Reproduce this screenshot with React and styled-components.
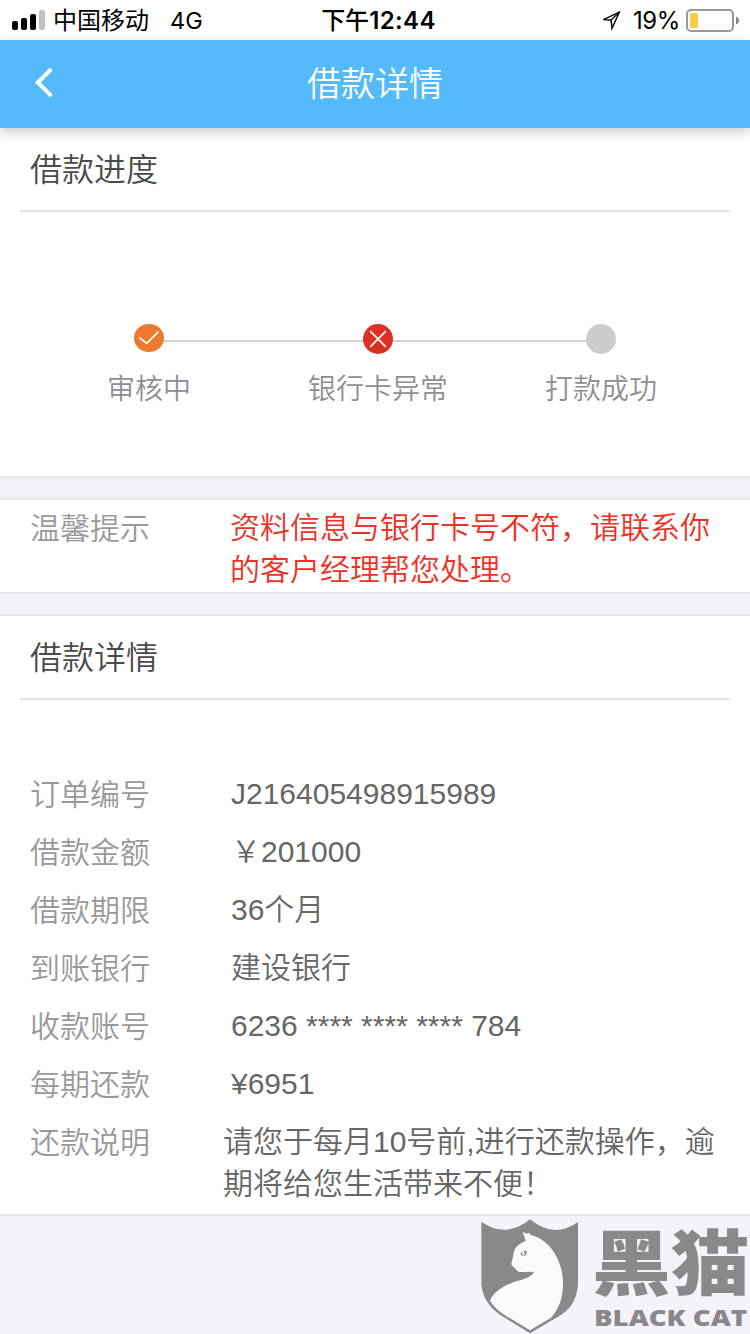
import React from 'react'
import styled, { createGlobalStyle, css } from 'styled-components'

const colors = {
  sky: '#55bafa',
  page: '#f3f3f9',
  border: '#e6e6e8',
  heading: '#4a4a4a',
  label: '#999999',
  value: '#666666',
  step: '#8e8e93',
  danger: '#ee3124',
  logo: '#8b888b',
}

const GlobalStyle = createGlobalStyle`
  body {
    margin: 0;
    background-color: ${colors.page};
    font-family: 'Liberation Sans', 'Noto Sans CJK SC', sans-serif;
    font-weight: 350;
  }
`

const Screen = styled.div`
  display: flex;
  flex-direction: column;
  width: 750px;
  height: 1334px;
  overflow: hidden;
  background-color: ${colors.page};
`

const StatusBar = styled.div`
  display: grid;
  grid-template-columns: 1fr auto 1fr;
  align-items: center;
  box-sizing: border-box;
  height: 40px;
  padding: 0 11px 0 12px;
  background-color: #fff;
  color: #000;
  font-family: Inter, 'Noto Sans CJK SC', sans-serif;
  font-size: 24px;
  font-weight: 400;
  line-height: 42px;
  white-space: nowrap;
`

const StatusGroup = styled.div`
  display: flex;
  align-items: center;
  justify-content: ${({ $end }) => ($end ? 'flex-end' : 'flex-start')};
`

const Carrier = styled.span`
  margin: 0 21px 0 8px;
`

const Network = styled.span`
  font-size: 23.5px;
`

const Clock = styled.span`
  font-weight: 600;
  letter-spacing: 0.4px;
  margin-left: 6px;
`

const ClockPeriod = styled.span`
  font-weight: 500;
  letter-spacing: 0;
`

const Percent = styled.span`
  margin: 0 6px 0 12px;
  letter-spacing: -0.4px;
`

const Header = styled.header`
  position: relative;
  display: grid;
  grid-template-columns: 90px 1fr 90px;
  align-items: start;
  height: 88px;
  background-color: ${colors.sky};
  box-shadow: 0 4px 12px rgba(0, 0, 0, 0.22);
  color: #fff;
`

const BackButton = styled.button`
  display: flex;
  align-items: flex-start;
  height: 88px;
  padding: 26px 0 0 34px;
  border: 0;
  background: none;
  color: inherit;
`

const HeaderTitle = styled.h1`
  margin: 0;
  font-size: 34px;
  font-weight: 350;
  line-height: 88px;
  text-align: center;
`

const Card = styled.section`
  box-sizing: border-box;
  flex: none;
  height: ${({ $height }) => $height}px;
  background-color: #fff;
  border-bottom: 2px solid ${colors.border};

  & + & {
    margin-top: 20px;
    border-top: 2px solid ${colors.border};
  }
`

const CardTitle = styled.h2`
  box-sizing: border-box;
  height: 84px;
  margin: 0 20px;
  padding-left: 10px;
  border-bottom: 2px solid ${colors.border};
  color: ${colors.heading};
  font-size: 32px;
  font-weight: 350;
  line-height: 84px;
`

const Rail = styled.div`
  display: flex;
  align-items: flex-start;
  padding: 112px 0 0 134px;
`

const Connector = styled.div`
  width: ${({ $width }) => $width}px;
  height: 2px;
  margin-top: 16px;
  background-color: #d2d2d2;
`

const StepIcon = styled.svg`
  flex: none;
  width: 30px;
  height: ${({ $height = 30 }) => $height}px;
`

const StepLabels = styled.div`
  display: grid;
  grid-template-columns: 298px 160px 286px;
  margin-top: 16px;
  color: ${colors.step};
  font-size: 28px;
  line-height: 40px;
  text-align: center;
`

const Row = styled.div`
  display: flex;
  padding-left: 30px;
  font-size: 30px;
  line-height: 42px;
`

const RowLabel = styled.div`
  flex: none;
  width: 200px;
  color: ${colors.label};
  line-height: 44px;
  height: 42px;
`

const RowValue = styled.div`
  color: ${colors.value};
  margin-left: 1px;
  white-space: pre-line;

  ${({ $wide }) =>
    $wide &&
    css`
      margin-left: -7px;
    `}
`

const Notice = styled(Row)`
  padding-top: 7px;
`

const NoticeText = styled.div`
  width: 490px;
  color: ${colors.danger};
`

const Details = styled.div`
  display: flex;
  flex-direction: column;
  gap: 16px;
  padding-top: 73px;
`

const Brand = styled.footer`
  display: flex;
  align-items: flex-start;
  align-self: flex-end;
  gap: 15px;
  padding-top: 2px;
  color: ${colors.logo};
`

const BrandText = styled.div`
  display: flex;
  flex-direction: column;
  gap: 9px;
  width: 156px;
  padding-top: 6px;
  white-space: nowrap;
`

const BrandName = styled.div`
  height: 74px;
  margin-left: -2px;
  font-family: 'Noto Sans CJK SC', sans-serif;
  font-size: 71px;
  font-weight: 900;
  line-height: 68px;
  transform: scaleX(1.11);
  transform-origin: 0 50%;
`

const BrandLatin = styled.div`
  font-family: 'Open Sans', sans-serif;
  font-size: 23px;
  font-weight: 800;
  line-height: 20px;
  transform: scaleX(1.2);
  transform-origin: 0 50%;
`

const SignalIcon = () => (
  <svg width="33" height="22" viewBox="0 0 33 22">
    <rect x="0" y="11" width="6" height="9" rx="2" />
    <rect x="9" y="8" width="6" height="12" rx="2" />
    <rect x="18" y="4" width="6" height="16" rx="2" />
    <rect x="27" y="0" width="6" height="20" rx="2" fill="#bfbfbf" />
  </svg>
)

const LocationIcon = () => (
  <svg width="20" height="20" viewBox="0 0 20 20" fill="none" stroke="#000">
    <path d="M18.3 1.2 2.4 8.6 10 9 11 17.4Z" strokeWidth="1.4" />
    <path d="M18.3 1.2 10 9" strokeWidth="1.2" />
  </svg>
)

const BatteryIcon = () => (
  <svg width="53" height="24" viewBox="0 0 53 24">
    <rect x="1" y="1" width="46" height="21" rx="4" fill="none" stroke="#999" strokeWidth="2" />
    <rect x="4" y="4" width="8" height="15" rx="1" fill="#f7ce46" />
    <path d="M50 7.5Q53 8.7 53 11.5T50 15.5Z" fill="#888" />
  </svg>
)

const BackIcon = () => (
  <svg width="20" height="34" viewBox="0 0 20 34" fill="none" stroke="#fff" strokeWidth="4">
    <path d="M17.3 3.2 3.8 16.5 17.3 29.8" />
  </svg>
)

const DoneIcon = () => (
  <StepIcon $height={28} viewBox="0 0 30 28">
    <ellipse cx="15" cy="14" rx="15" ry="14" fill="#ee792d" />
    <path d="M5.2 13.5 12.7 19.4 24.6 7.7" fill="none" stroke="#fff" strokeWidth="1.8" />
  </StepIcon>
)

const FailedIcon = () => (
  <StepIcon viewBox="0 0 30 30">
    <circle cx="15" cy="15" r="15" fill="#dc3023" />
    <path d="M7.2 7.2 22.8 22.8M22.8 7.2 7.2 22.8" stroke="#fff" strokeWidth="1.7" />
  </StepIcon>
)

const PendingIcon = () => (
  <StepIcon viewBox="0 0 30 30">
    <circle cx="15" cy="15" r="15" fill="#cccccc" />
  </StepIcon>
)

const CatShield = () => (
  <svg width="98" height="116" viewBox="63 54 294 348">
    <path
      d="M64 65Q138 117 210 58Q282 117 354 66V244C354 306 322 338 284 356L210 400L136 354C96 332 64 296 64 244Z"
      fill="currentColor"
    />
    <path
      d="M197 122 188 96 201 101 206 98 214 106C270 118 309 184 309 250C309 292 298 328 272 354L210 391 142 350C122 338 104 324 90 303C98 278 128 258 162 246C188 238 211 235 222 216C202 213 190 218 176 215C168 211 167 205 158 199C152 194 154 187 157 179C161 166 160 151 169 141C174 134 186 128 197 122Z"
      fill="#fafafc"
    />
    <path d="M181 160Q188 151 200 152Q202 166 190 169Q182 168 181 160Z" fill="currentColor" />
    <path d="M189 152Q197 159 191 168Q183 161 189 152Z" fill="#fafafc" />
  </svg>
)

const details = [
  { label: '订单编号', value: 'J216405498915989' },
  { label: '借款金额', value: '￥201000' },
  { label: '借款期限', value: '36个月' },
  { label: '到账银行', value: '建设银行' },
  { label: '收款账号', value: '6236 **** **** **** 784' },
  { label: '每期还款', value: '¥6951' },
  {
    label: '还款说明',
    value: '请您于每月10号前,进行还款操作，逾\n期将给您生活带来不便！',
    wide: true,
  },
]

const App = () => (
  <Screen>
    <GlobalStyle />
    <StatusBar>
      <StatusGroup>
        <SignalIcon />
        <Carrier>中国移动</Carrier>
        <Network>4G</Network>
      </StatusGroup>
      <Clock>
        <ClockPeriod>下午</ClockPeriod>12:44
      </Clock>
      <StatusGroup $end>
        <LocationIcon />
        <Percent>19%</Percent>
        <BatteryIcon />
      </StatusGroup>
    </StatusBar>
    <Header>
      <BackButton aria-label="返回">
        <BackIcon />
      </BackButton>
      <HeaderTitle>借款详情</HeaderTitle>
    </Header>
    <Card $height={350}>
      <CardTitle>借款进度</CardTitle>
      <Rail>
        <DoneIcon />
        <Connector $width={199} />
        <FailedIcon />
        <Connector $width={193} />
        <PendingIcon />
      </Rail>
      <StepLabels>
        <span>审核中</span>
        <span>银行卡异常</span>
        <span>打款成功</span>
      </StepLabels>
    </Card>
    <Card $height={96}>
      <Notice>
        <RowLabel>温馨提示</RowLabel>
        <NoticeText>资料信息与银行卡号不符，请联系你的客户经理帮您处理。</NoticeText>
      </Notice>
    </Card>
    <Card $height={602}>
      <CardTitle>借款详情</CardTitle>
      <Details>
        {details.map(({ label, value, wide }) => (
          <Row key={label}>
            <RowLabel>{label}</RowLabel>
            <RowValue $wide={wide}>{value}</RowValue>
          </Row>
        ))}
      </Details>
    </Card>
    <Brand>
      <CatShield />
      <BrandText>
        <BrandName>黑猫</BrandName>
        <BrandLatin>BLACK CAT</BrandLatin>
      </BrandText>
    </Brand>
  </Screen>
)

export default App
